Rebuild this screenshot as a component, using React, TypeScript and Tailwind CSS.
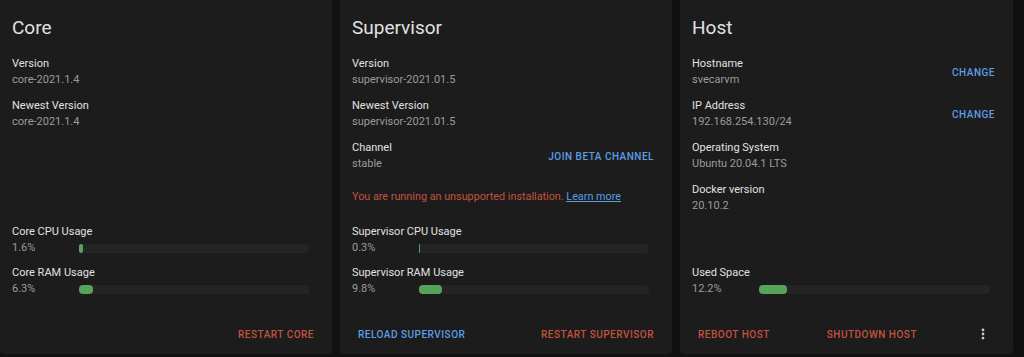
import React from "react";

const font = "font-['Roboto',_'Liberation_Sans',_sans-serif]";

function Row({ label, value, action }: { label: string; value: string; action?: string }) {
  return (
    <div className="mt-[10px] flex items-center justify-between first:mt-0">
      <div className="text-[11px] leading-[16px]">
        <div className="text-[#e1e1e1]">{label}</div>
        <div className="text-[#9b9b9b]">{value}</div>
      </div>
      {action && (
        <button className="mr-[6px] text-[10px] font-medium uppercase tracking-[0.5px] text-[#5d9de3]">{action}</button>
      )}
    </div>
  );
}

function Metric({ label, value, pct }: { label: string; value: string; pct: number }) {
  return (
    <div className="mt-[9px] first:mt-0 text-[11px] leading-[16px]">
      <div className="text-[#e1e1e1]">{label}</div>
      <div className="flex items-center">
        <span className="w-[67px] text-[#9b9b9b]">{value}</span>
        <div className="mr-[11px] h-[9px] flex-1 rounded-[3px] bg-[#242424]">
          <div className="h-full rounded-[4px] bg-[#58a35c]" style={{ width: `${pct}%`, minWidth: pct > 0 ? 1 : 0 }} />
        </div>
      </div>
    </div>
  );
}

function Card({
  title,
  children,
  metrics,
  actions,
  width,
}: {
  title: string;
  children: React.ReactNode;
  metrics: React.ReactNode;
  actions: React.ReactNode;
  width: string;
}) {
  return (
    <div className={`flex h-[354px] flex-col rounded-b-[4px] bg-[#1c1c1c] ${width}`}>
      <div className="flex flex-1 flex-col justify-between px-3 pb-[15px] pt-[16px]">
        <div>
          <h2 className="mb-[16px] text-[19px] leading-[24px] text-[#e1e1e1]">{title}</h2>
          {children}
        </div>
        <div>{metrics}</div>
      </div>
      <div className="flex h-[42px] items-center px-[18px] pt-[2px] text-[10px] font-medium uppercase tracking-[0.5px]">
        {actions}
      </div>
    </div>
  );
}

export default function App() {
  return (
    <div className={`h-[357px] w-[1024px] overflow-hidden bg-[#111111] ${font}`}>
      <div className="flex gap-2">
        <Card
          title="Core"
          width="w-[332px]"
          metrics={
            <>
              <Metric label="Core CPU Usage" value="1.6%" pct={1.6} />
              <Metric label="Core RAM Usage" value="6.3%" pct={6.3} />
            </>
          }
          actions={<button className="ml-auto text-[#c4523f] uppercase">Restart Core</button>}
        >
          <Row label="Version" value="core-2021.1.4" />
          <Row label="Newest Version" value="core-2021.1.4" />
        </Card>

        <Card
          title="Supervisor"
          width="w-[332px]"
          metrics={
            <>
              <Metric label="Supervisor CPU Usage" value="0.3%" pct={0.3} />
              <Metric label="Supervisor RAM Usage" value="9.8%" pct={9.8} />
            </>
          }
          actions={
            <div className="flex w-full justify-between">
              <button className="text-[#5d9de3] uppercase">Reload Supervisor</button>
              <button className="text-[#c4523f] uppercase">Restart Supervisor</button>
            </div>
          }
        >
          <Row label="Version" value="supervisor-2021.01.5" />
          <Row label="Newest Version" value="supervisor-2021.01.5" />
          <Row label="Channel" value="stable" action="Join beta channel" />
          <p className="mt-[17px] text-[10.8px] leading-[16px] text-[#c4523f]">
            You are running an unsupported installation.{" "}
            <a className="text-[#5d9de3] underline">Learn more</a>
          </p>
        </Card>

        <Card
          title="Host"
          width="w-[333px]"
          metrics={<Metric label="Used Space" value="12.2%" pct={12.2} />}
          actions={
            <div className="flex w-full items-center">
              <button className="text-[#c4523f] uppercase">Reboot Host</button>
              <button className="ml-[57px] text-[#c4523f] uppercase">Shutdown Host</button>
              <svg className="ml-auto mr-[5px]" width="14" height="14" viewBox="0 0 24 24" fill="#c8c8c8">
                <circle cx="12" cy="5" r="2.4" />
                <circle cx="12" cy="12" r="2.4" />
                <circle cx="12" cy="19" r="2.4" />
              </svg>
            </div>
          }
        >
          <Row label="Hostname" value="svecarvm" action="Change" />
          <Row label="IP Address" value="192.168.254.130/24" action="Change" />
          <Row label="Operating System" value="Ubuntu 20.04.1 LTS" />
          <Row label="Docker version" value="20.10.2" />
        </Card>
      </div>
    </div>
  );
}
